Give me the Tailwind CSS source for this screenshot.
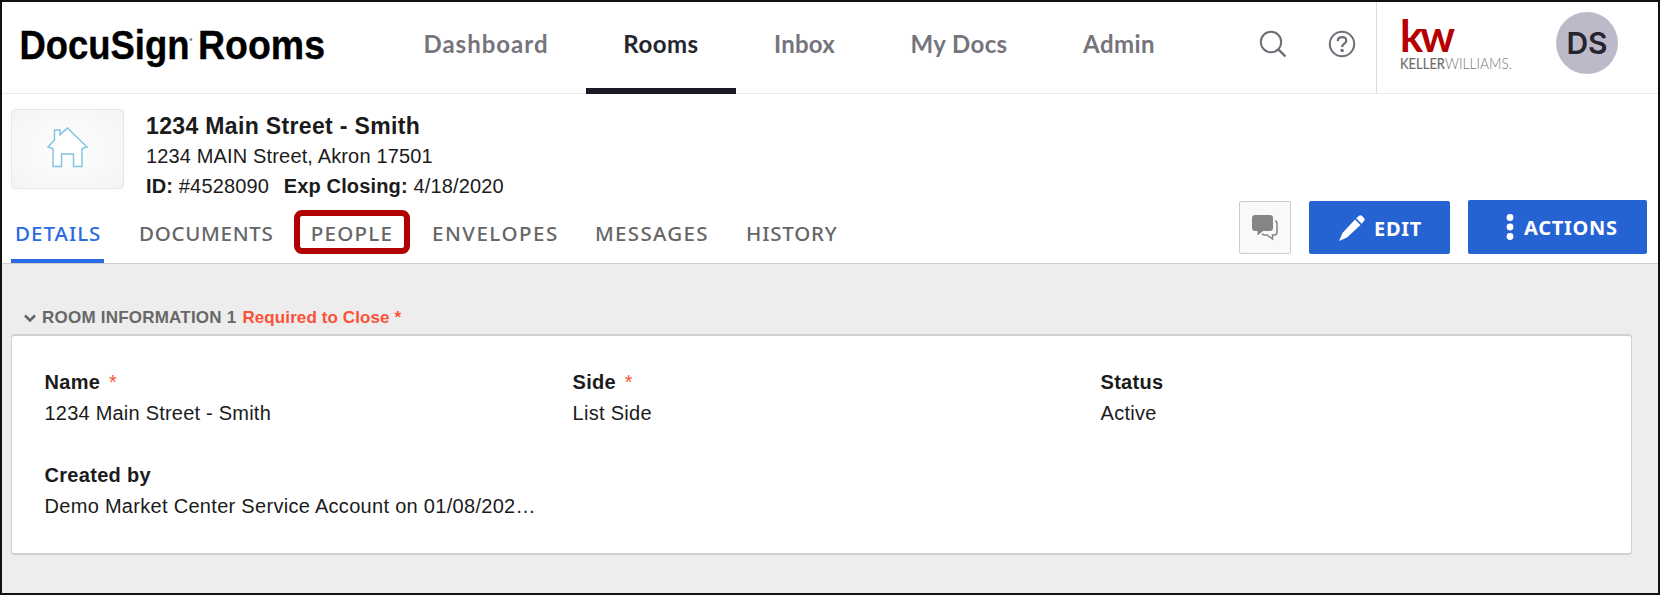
<!DOCTYPE html>
<html lang="en">
  <head>
    <meta charset="UTF-8" />
    <meta name="viewport" content="width=device-width, initial-scale=1.0" />
    <title>1234 Main Street - Smith - DocuSign Rooms</title>
    <script src="https://cdn.jsdelivr.net/npm/@tailwindcss/browser@4"></script>
  </head>
  <body class="bg-white text-[#1b1b1b] font-['Liberation_Sans',sans-serif]">
    <div class="flex flex-col w-[1660px] h-[595px] border-2 border-[#111] bg-[#ededed] overflow-hidden">
      <header class="flex h-[92px] shrink-0 bg-white border-b border-[#e9e9e9]">
        <a href="#" class="w-[384px] shrink-0 pl-4" aria-label="DocuSign Rooms">
          <svg class="block w-[320px] h-[72px] font-['Liberation_Sans',sans-serif] font-bold text-[41px]" viewBox="0 0 320 72" fill="#000" stroke="#000" stroke-width="0.4">
            <text x="1.500" y="56.500" textLength="170" lengthAdjust="spacingAndGlyphs">DocuSign</text>
            <circle cx="173" cy="37.5" r="1.3" fill="#777" stroke="none" />
            <text x="180" y="56.500" textLength="127" lengthAdjust="spacingAndGlyphs">Rooms</text>
          </svg>
        </a>
        <nav class="flex h-[92px] shrink-0 font-['Lato',sans-serif] font-bold text-[24px] leading-[29px] text-[#75747c] text-center">
          <a href="#" class="w-[200px] pt-[27px] tracking-[1px]">Dashboard</a>
          <a href="#" class="w-[150px] pt-[27px] tracking-[0.5px] text-[#26252f] border-b-6 border-[#191823]">Rooms</a>
          <a href="#" class="w-[137px] pt-[27px] tracking-[0.2px]">Inbox</a>
          <a href="#" class="w-[172px] pt-[27px] tracking-[0.4px]">My Docs</a>
          <a href="#" class="w-[148px] pt-[27px] tracking-[0.4px]">Admin</a>
        </nav>
        <div class="flex grow items-center justify-end gap-[41px] pr-[20px] pb-[8px]">
          <svg class="w-[28px] h-[28px]" viewBox="0 0 28 28" fill="none" stroke="#6f6e76" stroke-width="2">
            <circle cx="12" cy="12" r="10.2" />
            <path d="M19.3 19.3L26.5 26.5" stroke-width="2.4" />
          </svg>
          <svg class="w-[28px] h-[28px]" viewBox="0 0 28 28" fill="none" stroke="#6f6e76" stroke-width="2">
            <circle cx="14" cy="14" r="12.2" />
            <path d="M9.8 11.2C9.8 8.7 11.600 7.200 14.100 7.200C16.600 7.200 18.300 8.700 18.300 10.700C18.300 13.600 14.100 13.500 14.100 17" stroke-width="2.2" />
            <circle cx="14.1" cy="20.400" r="1.7" fill="#6f6e76" stroke="none" />
          </svg>
        </div>
        <div class="flex w-[282px] shrink-0 border-l border-[#dcdcdc]">
          <svg class="block ml-[14px] w-[128px] h-[80px] overflow-visible font-['Lato',sans-serif]" viewBox="0 0 128 80">
            <text x="9" y="50" textLength="52" lengthAdjust="spacingAndGlyphs" class="text-[44px] font-bold tracking-[-3px]" fill="#b60000">kw</text>
            <text x="9" y="67" textLength="45" lengthAdjust="spacingAndGlyphs" class="text-[16px]" fill="#6c6c6c" stroke="#6c6c6c" stroke-width="0.2">KELLER</text>
            <text x="54" y="67" textLength="67" lengthAdjust="spacingAndGlyphs" class="text-[16px] font-light" fill="#777">WILLIAMS.</text>
          </svg>
          <div class="mt-[10px] ml-[37px] flex w-[62px] h-[62px] items-center justify-center rounded-full bg-[#bcbac8] font-['Inter',sans-serif] font-semibold text-[30px] leading-[62px] text-[#26252f]">DS</div>
        </div>
      </header>

      <section class="flex h-[170px] shrink-0 justify-between bg-white border-b border-[#cfcfcf]">
        <div class="flex flex-col pl-[9px]">
          <div class="flex h-[106px] shrink-0">
            <div class="mt-[15px] mr-[22px] flex w-[113px] h-[80px] pb-[4px] items-center justify-center rounded-sm border border-[#e6e6e6] bg-radial from-[#fefefe] to-[#f4f4f4]">
              <svg class="w-[41px] h-[41px]" viewBox="0 0 41 41" fill="#fff" stroke="#7fc3e2" stroke-width="1.4">
                <path d="M20.500 1L40 20L35 21.600V39.500H26.500V27H14.500V39.500H6V21.600L1 20L7.500 13V3H13V7.800Z" />
              </svg>
            </div>
            <div class="pt-[17px] text-[20px] leading-[30px] tracking-[0.15px] whitespace-nowrap">
              <h1 class="text-[23px] font-bold tracking-[0.35px]">1234 Main Street - Smith</h1>
              <p>1234 MAIN Street, Akron 17501</p>
              <p><b>ID:</b> #4528090 <b class="ml-[9px]">Exp Closing:</b> 4/18/2020</p>
            </div>
          </div>
          <nav class="flex h-[63px] shrink-0 pt-[10px] font-['Noto_Sans',sans-serif] font-medium text-[20.500px] leading-[46px] text-[#666] tracking-[1.3px]">
            <a href="#" class="w-[93px] h-[53px] pl-[4px] tracking-[1px] text-[#2a6be4] border-b-4 border-[#2a6be4]">DETAILS</a>
            <a href="#" class="ml-[35px] w-[155px] tracking-[0.7px]">DOCUMENTS</a>
            <a href="#" class="w-[116px] h-[44px] leading-[34px] text-center rounded-lg border-6 border-[#b10005]">PEOPLE</a>
            <a href="#" class="pl-[22px] w-[185px] tracking-[1.500px]">ENVELOPES</a>
            <a href="#" class="w-[151px]">MESSAGES</a>
            <a href="#" class="tracking-[0.8px]">HISTORY</a>
          </nav>
        </div>
        <div class="flex items-end pb-[9px] pr-[11px] font-['Noto_Sans',sans-serif] font-bold text-[20px] tracking-[0.7px] text-white">
          <button class="mr-[18px] flex w-[52px] h-[53px] items-center justify-center rounded-xs border border-[#cdcdcd] bg-[#f9f9f9]" aria-label="Comments">
            <svg class="w-[26px] h-[26px]" viewBox="0 0 26 26" fill="#858585">
              <path d="M3 0H18Q21 0 21 3V13Q21 16 18 16H11L5.500 20.500V16H3Q0 16 0 13V3Q0 0 3 0Z" />
              <path d="M23 6Q25 6 25 8.500V17Q25 20 22 20H20.500V24L15 20H12L10 19" fill="none" stroke="#858585" stroke-width="1.500" />
            </svg>
          </button>
          <button class="mr-[18px] flex w-[141px] h-[53px] items-center rounded-xs bg-[#2463d1] pl-[30px] gap-[9px]">
            <svg class="w-[26px] h-[26px]" viewBox="0 0 26 26" fill="#fff">
              <path d="M16 4.500L21.500 10L8 22.500L0 26L3.500 18Z" />
              <path d="M17.200 3.300L20 .8Q21.500 -.3 23 1L25 3Q26.200 4.500 25 6L22.600 8.800Z" />
            </svg>
            <span class="pt-[2px]">EDIT</span>
          </button>
          <button class="flex w-[179px] h-[54px] items-center rounded-xs bg-[#2463d1] pl-[38px] gap-[10px]">
            <svg class="w-[8px] h-[26px]" viewBox="0 0 8 26" fill="#fff">
              <circle cx="4" cy="3.500" r="3.400" />
              <circle cx="4" cy="13" r="3.400" />
              <circle cx="4" cy="22.500" r="3.400" />
            </svg>
            <span class="pt-[2px]">ACTIONS</span>
          </button>
        </div>
      </section>

      <main class="pt-[44px] pl-[9px] pr-[26px]">
        <h2 class="flex items-center pl-[13px] h-[20px] mb-[6px] text-[17px] leading-[20px] font-bold text-[#686868] tracking-[0.22px]">
          <svg class="mr-[6px] w-[12px] h-[10px]" viewBox="0 0 12 10" fill="none" stroke="#666" stroke-width="2.6">
            <path d="M1 2.500L6 7.500L11 2.500" />
          </svg>
          <span>ROOM INFORMATION 1</span>
          <span class="ml-[6px] tracking-[0.1px] text-[#fb5237]">Required to Close *</span>
        </h2>
        <div class="grid h-[221px] content-start grid-cols-[528px_528px_1fr] gap-y-[31px] rounded-sm border border-[#d0d0d0] border-t-2 border-b-2 bg-white pt-[31px] pl-[32.500px] text-[20px] leading-[31px] tracking-[0.3px] whitespace-nowrap">
          <div>
            <h3 class="font-bold">Name <span class="ml-[3px] font-normal text-[#fb5237]">*</span></h3>
            <p class="tracking-[0.22px]">1234 Main Street - Smith</p>
          </div>
          <div>
            <h3 class="font-bold">Side <span class="ml-[3px] font-normal text-[#fb5237]">*</span></h3>
            <p>List Side</p>
          </div>
          <div>
            <h3 class="font-bold">Status</h3>
            <p>Active</p>
          </div>
          <div>
            <h3 class="font-bold">Created by</h3>
            <p>Demo Market Center Service Account on 01/08/202…</p>
          </div>
        </div>
      </main>
    </div>
  </body>
</html>
